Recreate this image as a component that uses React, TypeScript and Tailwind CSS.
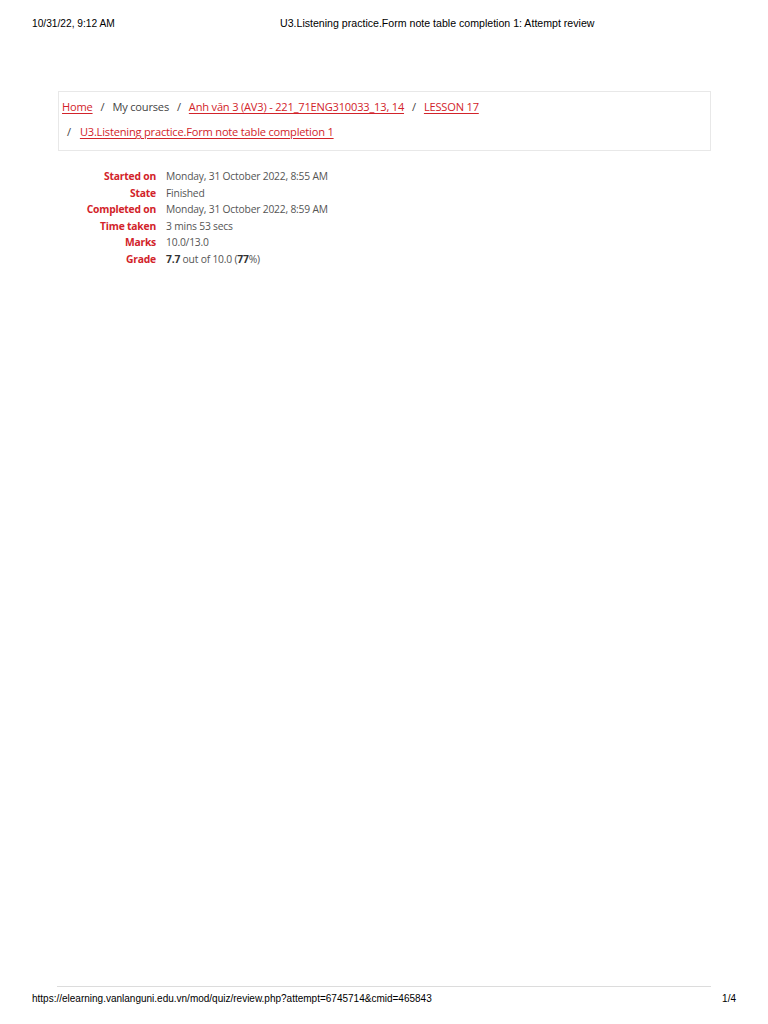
export default function App() {
  const rows: [string, React.ReactNode][] = [
    ['Started on', 'Monday, 31 October 2022, 8:55 AM'],
    ['State', 'Finished'],
    ['Completed on', 'Monday, 31 October 2022, 8:59 AM'],
    ['Time taken', '3 mins 53 secs'],
    ['Marks', '10.0/13.0'],
    [
      'Grade',
      <>
        <b className="font-bold text-[#333]">7.7</b> out of 10.0 (<b className="font-bold text-[#333]">77</b>%)
      </>,
    ],
  ]

  return (
    <div className="w-[768px] h-[1024px] bg-white relative flex flex-col">
      {/* print header */}
      <div className="flex items-center h-[14px] mt-[17px] px-[32px] text-[10.2px] text-black font-['Liberation_Sans',Arial,sans-serif]">
        <span className="w-[248px]">10/31/22, 9:12 AM</span>
        <span className="text-[10.6px]">U3.Listening practice.Form note table completion 1: Attempt review</span>
      </div>

      <div className="flex-1 pl-[58px] pr-[57px] pt-[60px] font-['Open_Sans','Noto_Sans',sans-serif]">
        <nav className="border border-[#e8e8e8] px-[3px] pt-[2px] pb-[6px] text-[11.1px] text-[#444] leading-[25px] tracking-[-0.2px]">
          <div className="flex items-center">
            <a className="text-[#d2232a] underline underline-offset-2">Home</a>
            <span className="mx-[8px]">/</span>
            <span>My courses</span>
            <span className="mx-[8px]">/</span>
            <a className="text-[#d2232a] underline underline-offset-2">Anh văn 3 (AV3) - 221_71ENG310033_13, 14</a>
            <span className="mx-[8px]">/</span>
            <a className="text-[#d2232a] underline underline-offset-2">LESSON 17</a>
          </div>
          <div className="flex items-center pl-[5px]">
            <span className="mr-[9px]">/</span>
            <a className="text-[#d2232a] underline underline-offset-2">U3.Listening practice.Form note table completion 1</a>
          </div>
        </nav>

        <table className="mt-[17px] text-[10.3px] leading-[16.6px] tracking-[-0.2px]">
          <tbody>
            {rows.map(([label, value]) => (
              <tr key={label}>
                <th className="w-[108px] text-right pr-[10px] font-bold text-[#d2232a]">{label}</th>
                <td className="text-[#555]">{value}</td>
              </tr>
            ))}
          </tbody>
        </table>
      </div>

      {/* print footer */}
      <div className="mx-[57px] border-t border-[#dcdcdc]" />
      <div className="flex justify-between items-center h-[14px] mt-[4px] mb-[19px] px-[32px] text-[10px] text-black font-['Liberation_Sans',Arial,sans-serif]">
        <span>https://elearning.vanlanguni.edu.vn/mod/quiz/review.php?attempt=6745714&amp;cmid=465843</span>
        <span>1/4</span>
      </div>
    </div>
  )
}
